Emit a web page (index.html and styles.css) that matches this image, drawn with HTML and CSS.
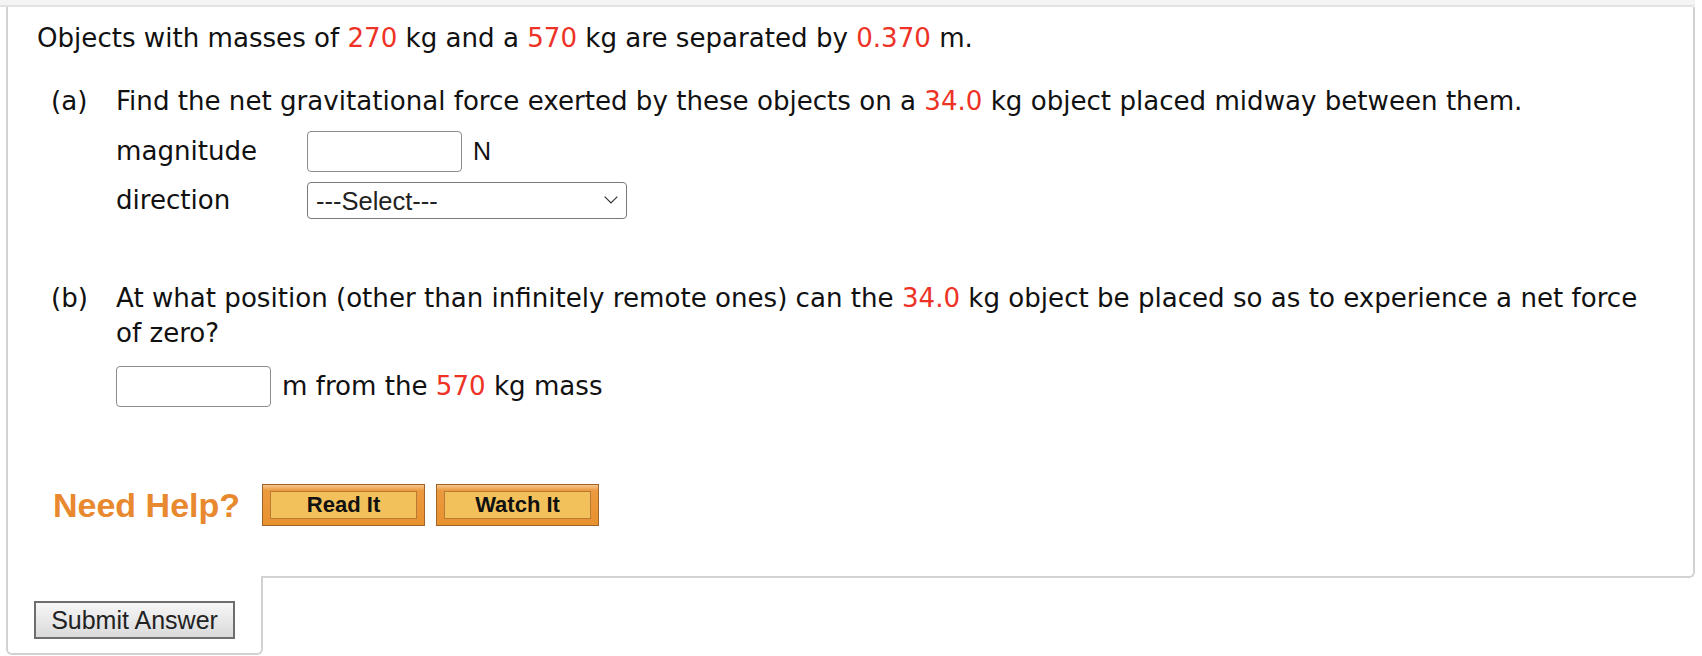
FILE: index.html
```html
<!DOCTYPE html>
<html lang="en">
<head>
<meta charset="utf-8">
<title>Question</title>
<link rel="stylesheet" href="styles.css">
</head>
<body>
<div class="topbar"></div>
<div class="question">
  <p class="stem">Objects with masses of <span class="num">270</span> kg and a <span class="num">570</span> kg are separated by <span class="num">0.370</span> m.</p>

  <div class="part part-a">
    <div class="part-label">(a)</div>
    <div class="part-body">
      <p class="prompt">Find the net gravitational force exerted by these objects on a <span class="num">34.0</span> kg object placed midway between them.</p>
      <div class="answer-row row-first">
        <span class="field-label">magnitude</span>
        <input class="text-input" type="text">
        <span class="unit">N</span>
      </div>
      <div class="answer-row row-second">
        <span class="field-label">direction</span>
        <div class="select-wrap">
          <select class="select"><option>---Select---</option></select>
          <svg class="chevron" width="14" height="8" viewBox="0 0 14 8"><path d="M0.7 0.7 L7 7 L13.3 0.7" fill="none" stroke="#333" stroke-width="1.2"/></svg>
        </div>
      </div>
    </div>
  </div>

  <div class="part part-b">
    <div class="part-label">(b)</div>
    <div class="part-body">
      <p class="prompt">At what position (other than infinitely remote ones) can the <span class="num">34.0</span> kg object be placed so as to experience a net force of zero?</p>
      <div class="answer-row row-b">
        <input class="text-input" type="text">
        <span class="unit-text">m from the <span class="num">570</span> kg mass</span>
      </div>
    </div>
  </div>

  <div class="help-row">
    <span class="need-help">Need Help?</span>
    <span class="help-btn"><span class="help-inner">Read It</span></span>
    <span class="help-btn"><span class="help-inner">Watch It</span></span>
  </div>
</div>
<div class="submit-tab">
  <button class="submit" type="button">Submit Answer</button>
</div>
</body>
</html>
```

FILE: styles.css
```css
html, body {
  margin: 0;
  padding: 0;
  background: #ffffff;
}

body {
  width: 1702px;
  height: 656px;
  overflow: hidden;
  font-family: Verdana, "DejaVu Sans", sans-serif;
  font-size: 26.1px;
  line-height: 35px;
  color: #111111;
}

.topbar {
  width: 1695px;
  height: 5px;
  background: #f4f4f4;
  border-bottom: 2px solid #e2e2e2;
  border-bottom-right-radius: 4px;
  box-sizing: content-box;
}

.question {
  margin-left: 6px;
  width: 1689px;
  box-sizing: border-box;
  border: 2px solid #d2d2d2;
  border-top: none;
  border-bottom-right-radius: 6px;
  padding: 14px 30px 50px 29px;
  background: #ffffff;
}

p {
  margin: 0;
}

.num {
  color: #ee3226;
}

.part {
  display: flex;
  margin-left: 14px;
}

.part-a {
  margin-top: 28px;
}

.part-b {
  margin-top: 62px;
}

.part-label {
  width: 65px;
  flex: none;
}

.part-body {
  flex: 1;
}

.answer-row {
  display: flex;
  align-items: center;
}

.row-first {
  margin-top: 12px;
}

.row-second {
  margin-top: 10px;
}

.row-b {
  margin-top: 15px;
}

.field-label {
  width: 191px;
  flex: none;
}

.text-input {
  width: 155px;
  height: 41px;
  box-sizing: border-box;
  border: 1px solid #8c8c8c;
  border-radius: 4px;
  background: #ffffff;
  margin: 0;
  padding: 0 6px;
  font-size: 20px;
}

.unit {
  margin-left: 11px;
  font-family: "Liberation Sans", Arial, sans-serif;
  font-size: 25px;
}

.unit-text {
  margin-left: 11px;
}

.select-wrap {
  position: relative;
  width: 320px;
  height: 37px;
}

.select {
  appearance: none;
  -webkit-appearance: none;
  width: 320px;
  height: 37px;
  box-sizing: border-box;
  border: 1px solid #7a7a7a;
  border-radius: 4px;
  background: #ffffff;
  margin: 0;
  padding: 0 0 0 8px;
  font-family: "Liberation Sans", Arial, sans-serif;
  font-size: 25.5px;
  color: #222222;
}

.chevron {
  position: absolute;
  right: 9px;
  top: 14px;
  pointer-events: none;
}

.help-row {
  display: flex;
  align-items: center;
  margin-top: 77px;
  height: 42px;
}

.need-help {
  margin-left: 16px;
  margin-right: 22px;
  font-family: "Liberation Sans", Arial, sans-serif;
  font-weight: bold;
  font-size: 34px;
  color: #e8892f;
  line-height: 42px;
}

.help-btn {
  display: flex;
  width: 163px;
  height: 42px;
  box-sizing: border-box;
  margin-right: 11px;
  padding: 6px 7px;
  border: 1px solid #a0642a;
  background: linear-gradient(#f6c98e 0%, #eb9a3e 14%, #e8922f 100%);
}

.help-inner {
  flex: 1;
  display: flex;
  align-items: center;
  justify-content: center;
  border: 1px solid #b97a36;
  background: #f3c15c;
  font-family: "Liberation Sans", Arial, sans-serif;
  font-weight: bold;
  font-size: 22px;
  color: #111111;
  line-height: 1;
}

.submit-tab {
  margin-left: 6px;
  margin-top: -2px;
  width: 257px;
  height: 79px;
  box-sizing: border-box;
  border: 2px solid #d2d2d2;
  border-top: none;
  border-radius: 0 0 6px 6px;
  background: #ffffff;
  padding: 25px 0 0 26px;
}

.submit {
  width: 201px;
  height: 38px;
  box-sizing: border-box;
  margin: 0;
  padding: 0;
  border: 2px solid #6e6e6e;
  border-radius: 0;
  background: linear-gradient(#f6f6f6, #dadada);
  font-family: "Liberation Sans", Arial, sans-serif;
  font-size: 25px;
  color: #222222;
  line-height: 34px;
}
```
